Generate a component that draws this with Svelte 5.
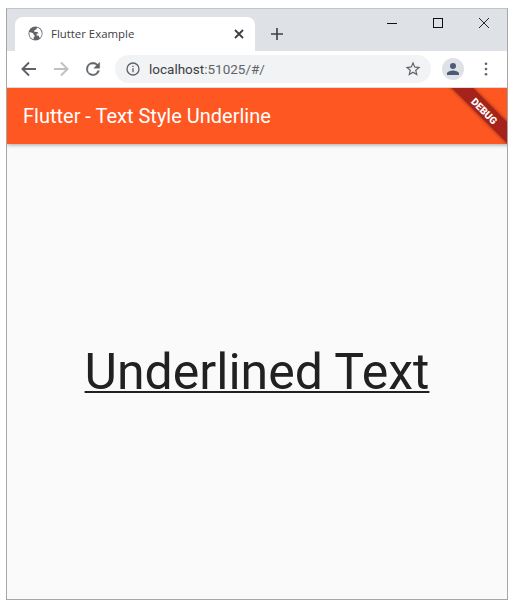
<script>
  const title = "Flutter Example";
</script>

<div class="window">
  <div class="tabstrip">
    <div class="tab">
      <svg class="globe" viewBox="0 0 16 16" width="15" height="15"><circle cx="8" cy="8" r="7.500" fill="#5f6368"/><path fill="#fff" d="M1.500 6.500L5 7.500l2 2.500v1.500l-1 .5v2.300A6.600 6.600 0 0 1 1.500 8.500zM9.500 1.700L9.200 3.500 7 4.200 6.500 6l3.500.3L11.500 8h-2l-.5 2 2.500.4.500 1.800 1 .3A6.600 6.600 0 0 0 9.500 1.700z"/></svg>
      <span class="tab-title">{title}</span>
      <svg class="tab-close" viewBox="0 0 10 10" width="10" height="10"><path d="M1 1l8 8M9 1L1 9" stroke="#3c4043" stroke-width="1.800" fill="none"/></svg>
    </div>
    <svg class="newtab" viewBox="0 0 12 12" width="12" height="12"><path d="M6 0v12M0 6h12" stroke="#3c4043" stroke-width="1.600" fill="none"/></svg>
    <div class="winbtns">
      <svg viewBox="0 0 10 10" width="10" height="10"><path d="M0 5.500h10" stroke="#111" fill="none"/></svg>
      <svg viewBox="0 0 10 10" width="10" height="10"><rect x=".5" y=".5" width="9" height="9" stroke="#111" fill="none"/></svg>
      <svg viewBox="0 0 10 10" width="10" height="10"><path d="M0 0l10 10M10 0L0 10" stroke="#111" stroke-width=".9" fill="none"/></svg>
    </div>
  </div>

  <div class="toolbar">
    <svg class="nav" viewBox="0 0 20 20" width="20" height="20"><path d="M17 10H4M10 3.500L3.500 10l6.500 6.500" stroke="#5f6368" stroke-width="2" fill="none"/></svg>
    <svg class="nav" viewBox="0 0 20 20" width="20" height="20"><path d="M3 10h13M10 3.500l6.500 6.500-6.500 6.500" stroke="#bdc1c6" stroke-width="2" fill="none"/></svg>
    <svg class="nav" viewBox="0 0 24 24" width="20" height="20"><path fill="#5f6368" d="M17.650 6.350A7.960 7.960 0 0 0 12 4a8 8 0 1 0 7.730 10h-2.280A6 6 0 1 1 12 6.100c1.660 0 3.140.6 4.220 1.680L13 11h7V4l-2.350 2.350z" stroke="#5f6368" stroke-width=".5"/></svg>
    <div class="omnibox">
      <svg viewBox="0 0 24 24" width="16" height="16"><path fill="#5f6368" d="M11 7h2v2h-2zm0 4h2v6h-2zm1-9a10 10 0 1 0 0 20 10 10 0 0 0 0-20zm0 18a8 8 0 1 1 0-16 8 8 0 0 1 0 16z"/></svg>
      <span class="url">localhost<span class="url-rest">:51025/#/</span></span>
      <svg class="star" viewBox="0 0 24 24" width="18" height="18"><path fill="#5f6368" d="M22 9.240l-7.190-.62L12 2 9.190 8.630 2 9.240l5.460 4.730L5.820 21 12 17.270 18.180 21l-1.630-7.030L22 9.240zM12 15.400l-3.760 2.270 1-4.280-3.320-2.880 4.380-.38L12 6.100l1.710 4.040 4.380.38-3.320 2.880 1 4.280L12 15.400z"/></svg>
    </div>
    <div class="avatar">
      <svg viewBox="0 0 24 24" width="18" height="18"><path fill="#4b5a75" d="M12 12a4 4 0 1 0 0-8 4 4 0 0 0 0 8zm0 2c-2.700 0-8 1.340-8 4v2h16v-2c0-2.660-5.300-4-8-4z"/></svg>
    </div>
    <svg class="menu" viewBox="0 0 4 16" width="4" height="14"><circle cx="2" cy="2" r="1.500" fill="#5f6368"/><circle cx="2" cy="8" r="1.500" fill="#5f6368"/><circle cx="2" cy="14" r="1.500" fill="#5f6368"/></svg>
  </div>

  <div class="page">
    <header class="appbar">Flutter - Text Style Underline</header>
    <main class="content">
      <span class="underlined">Underlined Text</span>
    </main>
    <div class="debug"><span>DEBUG</span></div>
  </div>
</div>

<style>
  :global(body) {
    background: #fff;
    font-family: Roboto, "Liberation Sans", sans-serif;
  }
  .window {
    box-sizing: border-box;
    width: 502px;
    height: 592px;
    margin: 8px 0 0 6px;
    border: 1px solid #a6a6a6;
    border-top-color: #c4c4c4;
    display: flex;
    flex-direction: column;
    overflow: hidden;
  }
  .tabstrip {
    height: 42px;
    flex: none;
    background: #dee1e6;
    display: flex;
    align-items: flex-end;
    padding-left: 8px;
    position: relative;
  }
  .tab {
    box-sizing: border-box;
    width: 240px;
    height: 34px;
    background: #fff;
    border-radius: 8px 8px 0 0;
    display: flex;
    align-items: center;
    padding: 0 11px 1px 13px;
  }
  .tab-title {
    margin-left: 8px;
    flex: 1;
    font-family: "Open Sans", "Liberation Sans", sans-serif;
    font-size: 11.400px;
    color: #3c4043;
  }
  .newtab {
    margin: 0 0 11px 16px;
  }
  .winbtns {
    position: absolute;
    top: 9px;
    right: 18px;
    display: flex;
    gap: 36px;
  }
  .toolbar {
    flex: none;
    box-sizing: border-box;
    background: #fff;
    border-bottom: 1px solid #dadce0;
    display: flex;
    align-items: center;
    padding-left: 12px;
    height: 37px;
  }
  .nav {
    margin-right: 12px;
  }
  .omnibox {
    box-sizing: border-box;
    width: 316px;
    height: 28px;
    background: #f1f3f4;
    border-radius: 14px;
    display: flex;
    align-items: center;
    padding: 0 9px 0 10px;
  }
  .url {
    flex: 1;
    margin-left: 8px;
    font-family: Roboto, "Liberation Sans", sans-serif;
    font-size: 13.500px;
    color: #3c4043;
  }
  .url-rest {
    color: #5f6368;
  }
  .avatar {
    width: 22px;
    height: 22px;
    margin-left: 11px;
    border-radius: 50%;
    background: #dee1e6;
    display: flex;
    align-items: center;
    justify-content: center;
  }
  .menu {
    margin-left: 20px;
  }
  .page {
    flex: 1;
    display: flex;
    flex-direction: column;
    background: #fafafa;
    position: relative;
    overflow: hidden;
  }
  .appbar {
    height: 56px;
    flex: none;
    box-sizing: border-box;
    background: #ff5722;
    color: #fff;
    font-size: 20px;
    line-height: 56px;
    padding-left: 16px;
    box-shadow: 0 1px 4px rgba(0, 0, 0, 0.35);
  }
  .content {
    flex: 1;
    display: flex;
    align-items: center;
    justify-content: center;
  }
  .underlined {
    font-size: 50px;
    color: #212121;
    text-decoration: underline;
    text-decoration-thickness: 2px;
    text-underline-offset: 2px;
  }
  .debug {
    position: absolute;
    top: 15px;
    right: -23px;
    width: 90px;
    height: 15px;
    transform: rotate(45deg);
    background: #a5231a;
    box-shadow: 0 0 4px rgba(0, 0, 0, 0.5);
    display: flex;
    align-items: center;
    justify-content: center;
  }
  .debug span {
    color: #fff;
    font-family: Roboto, "Liberation Sans", sans-serif;
    font-size: 10px;
    font-weight: 900;
    margin-top: 1px;
  }
</style>
